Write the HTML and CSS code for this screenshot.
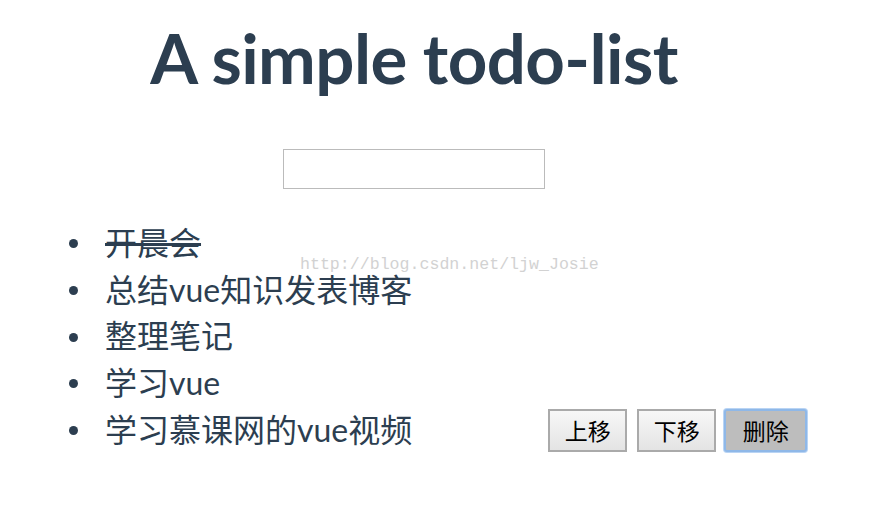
FILE: index.html
```html
<!DOCTYPE html>
<html lang="zh">
<head>
<meta charset="utf-8">
<title>todo-list</title>
<link rel="stylesheet" href="styles.css">
</head>
<body>
<div class="app">
  <h1 class="title">A simple todo-list</h1>
  <div class="add-row">
    <input class="new-todo" type="text">
  </div>
  <ul class="todos">
    <li class="todo done"><span class="label">开晨会</span></li>
    <li class="todo"><span class="label">总结vue知识发表博客</span></li>
    <li class="todo"><span class="label">整理笔记</span></li>
    <li class="todo"><span class="label">学习vue</span></li>
    <li class="todo">
      <span class="label">学习慕课网的vue视频</span>
      <span class="actions">
        <button class="btn">上移</button>
        <button class="btn">下移</button>
        <button class="btn btn-active">删除</button>
      </span>
    </li>
  </ul>
  <div class="mark">http://blog.csdn.net/ljw_Josie</div>
</div>
</body>
</html>
```
FILE: styles.css
```css
html, body {
  margin: 0;
  padding: 0;
  background: #fff;
}

.app {
  position: relative;
  width: 828px;
  color: #2c3e50;
  font-family: Lato, "Noto Sans CJK SC", sans-serif;
}

.title {
  margin: 0;
  padding-top: 16px;
  text-align: center;
  font-size: 69px;
  font-weight: 700;
  letter-spacing: -0.6px;
  line-height: 84px;
}

.add-row {
  display: flex;
  justify-content: center;
  padding-top: 49px;
}

.new-todo {
  box-sizing: border-box;
  width: 262px;
  height: 40px;
  margin: 0 0 0 -1px;
  border: 1px solid #bbb;
  border-radius: 0;
  outline: none;
}

.todos {
  margin: 31px 0 0;
  padding: 0 0 0 105px;
  font-size: 32px;
  line-height: 46.7px;
}

.todo {
  list-style: none;
  position: relative;
  display: flex;
  align-items: center;
}

.todo::before {
  content: "";
  position: absolute;
  left: -36px;
  top: 50%;
  width: 9px;
  height: 9px;
  margin-top: -4px;
  border-radius: 50%;
  background: #2c3e50;
}

.done .label {
  text-decoration: line-through;
}

.actions {
  display: flex;
  gap: 10px;
  margin-left: 136px;
}

.btn {
  box-sizing: border-box;
  width: 79px;
  height: 43px;
  padding: 0;
  font-family: "Noto Sans CJK SC", sans-serif;
  font-size: 23px;
  color: #000;
  background: linear-gradient(#f7f7f7, #e4e4e4);
  border: 2px solid #aaa;
  border-radius: 0;
}

.btn + .btn-active {
  margin-left: -2px;
  width: 83px;
  background: #bdbdbd;
  border: 2px solid #8fb8e8;
  border-radius: 3px;
  box-shadow: 0 0 0 1px #b9d4f4;
}

.mark {
  position: absolute;
  left: 300px;
  top: 256px;
  font-family: "Liberation Mono", monospace;
  font-size: 16.6px;
  line-height: 18px;
  color: #d2d2d2;
}
```
